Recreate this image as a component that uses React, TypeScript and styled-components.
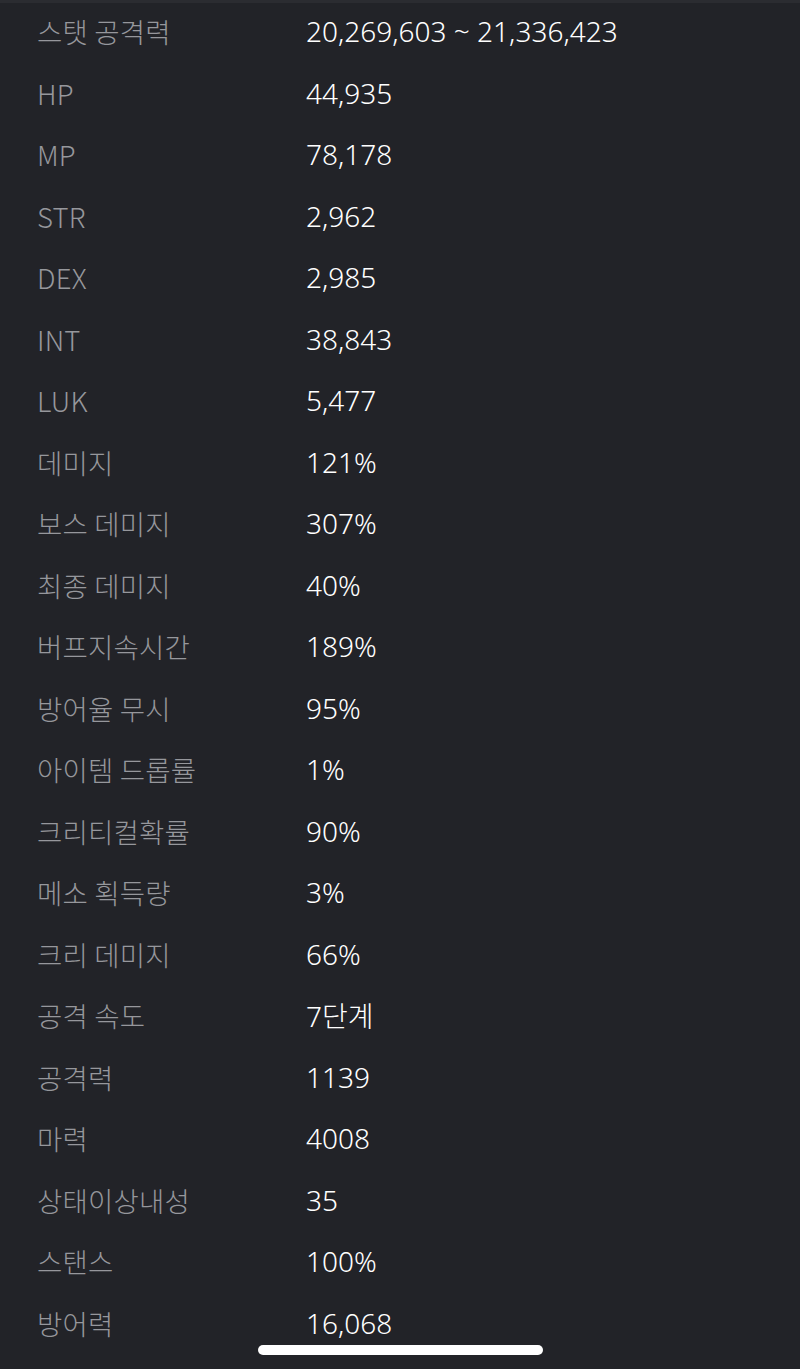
import React from "react";
import styled, { createGlobalStyle } from "styled-components";

const GlobalStyle = createGlobalStyle`
  html, body {
    margin: 0;
    padding: 0;
    background-color: #222328;
  }
  body {
    font-family: "Noto Sans CJK KR", "Noto Sans", sans-serif;
  }
`;

const Page = styled.div`
  position: relative;
  width: 800px;
  height: 1369px;
  overflow: hidden;
  background-color: #222328;
  border-top: 3px solid #2b2c31;
  box-sizing: border-box;
`;

const StatList = styled.ul`
  list-style: none;
  margin: -2.5px 0 0;
  padding: 0 0 0 37px;
`;

const StatRow = styled.li`
  display: grid;
  grid-template-columns: 269px 1fr;
  align-items: center;
  height: 61.5px;
`;

const Label = styled.span`
  color: #96979c;
  font-size: 27.5px;
  font-weight: 300;
  letter-spacing: 0.2px;
`;

const Value = styled.span`
  color: #ffffff;
  font-family: "Noto Sans", "Noto Sans CJK KR", sans-serif;
  font-size: 28px;
  font-weight: 300;
`;

const HomeIndicator = styled.div`
  position: absolute;
  left: 258px;
  top: 1342px;
  width: 285px;
  height: 10px;
  border-radius: 5px;
  background-color: #ffffff;
`;

const stats: [string, string][] = [
  ["스탯 공격력", "20,269,603 ~ 21,336,423"],
  ["HP", "44,935"],
  ["MP", "78,178"],
  ["STR", "2,962"],
  ["DEX", "2,985"],
  ["INT", "38,843"],
  ["LUK", "5,477"],
  ["데미지", "121%"],
  ["보스 데미지", "307%"],
  ["최종 데미지", "40%"],
  ["버프지속시간", "189%"],
  ["방어율 무시", "95%"],
  ["아이템 드롭률", "1%"],
  ["크리티컬확률", "90%"],
  ["메소 획득량", "3%"],
  ["크리 데미지", "66%"],
  ["공격 속도", "7단계"],
  ["공격력", "1139"],
  ["마력", "4008"],
  ["상태이상내성", "35"],
  ["스탠스", "100%"],
  ["방어력", "16,068"],
];

function App() {
  return (
    <Page>
      <GlobalStyle />
      <StatList>
        {stats.map(([label, value]) => (
          <StatRow key={label}>
            <Label>{label}</Label>
            <Value>{value}</Value>
          </StatRow>
        ))}
      </StatList>
      <HomeIndicator />
    </Page>
  );
}

export default App;
